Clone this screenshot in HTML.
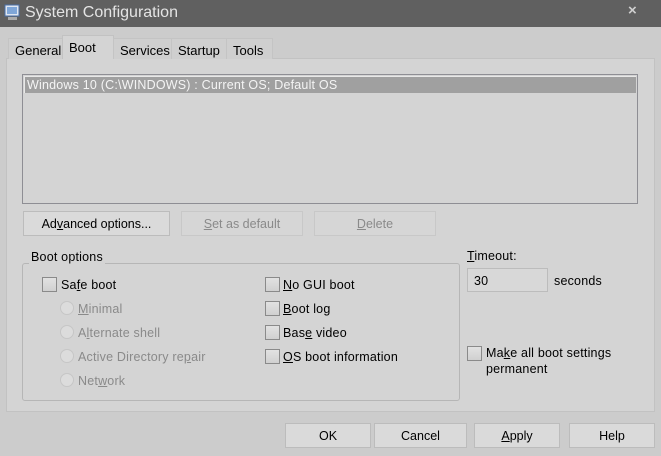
<!DOCTYPE html>
<html><head><meta charset="utf-8"><style>
*{margin:0;padding:0;box-sizing:border-box}
body{width:661px;height:456px;background:#cccccc;font:12px "Liberation Sans",sans-serif;color:#000;position:relative;overflow:hidden}
.a{position:absolute;white-space:nowrap}
.title{left:0;top:0;width:661px;height:27px;background:#606060}
.tab{position:absolute;top:38px;height:21px;border:1px solid #c4c4c4;border-bottom:none;background:#cfcfcf;padding:4px 0 0 6px;font-size:13px}
.btn{position:absolute;height:25px;border:1px solid #bcbcbc;background:#dadada;text-align:center;line-height:25px;font-size:12.5px}
.dis{color:#8a8a8a;background:#d6d6d6;border-color:#c8c8c8}
.cb{position:absolute;width:15px;height:15px;border:1px solid #8a8a8a;background:linear-gradient(#e2e2e2,#d0d0d0)}
.rd{position:absolute;width:14px;height:14px;border-radius:50%;border:1px solid #c6c6c6;background:#dcdcdc}
.g{color:#8a8a8a}
.t{font-size:12.5px;letter-spacing:0.2px}
u{text-decoration:underline}
</style></head><body>
<div class="a title"></div>
<svg class="a" style="left:4px;top:4px" width="18" height="18" viewBox="0 0 18 18"><rect x="1" y="1" width="14" height="11" fill="#dfe6f0" stroke="#4a6fa8"/><rect x="3" y="3" width="10" height="7" fill="#7fa6d8"/><rect x="4" y="13" width="9" height="3" fill="#aaa"/></svg>
<div class="a" style="left:25px;top:4px;font-size:16px;color:#e4e4e4">System Configuration</div>
<div class="a" style="left:628px;top:2px;font-size:15px;color:#cfcfcf;font-weight:bold">×</div>
<div class="a" style="left:6px;top:58px;width:649px;height:354px;background:#d4d4d4;border:1px solid #c2c2c2"></div>
<div class="tab" style="left:8px;width:55px">General</div>
<div class="tab" style="left:62px;top:35px;height:24px;width:52px;background:#d4d4d4;border-color:#c2c2c2;padding-top:4px">Boot</div>
<div class="tab" style="left:113px;width:59px">Services</div>
<div class="tab" style="left:171px;width:56px">Startup</div>
<div class="tab" style="left:226px;width:47px">Tools</div>
<div class="a" style="left:22px;top:74px;width:616px;height:130px;border:1px solid #8e8e94;background:#d4d4d4"></div>
<div class="a" style="left:24px;top:76px;width:612px;height:17px;background:#a0a0a0;border-top:1px solid #e8e8e8;border-left:1px solid #e8e8e8;color:#f4f4f4;padding-left:2px;line-height:16px;font-size:12.5px;letter-spacing:0.2px">Windows 10 (C:\WINDOWS) : Current OS; Default OS</div>
<div class="btn" style="left:23px;top:211px;width:147px">Ad<u>v</u>anced options...</div>
<div class="btn dis" style="left:181px;top:211px;width:122px"><u>S</u>et as default</div>
<div class="btn dis" style="left:314px;top:211px;width:122px"><u>D</u>elete</div>
<div class="a" style="left:22px;top:263px;width:438px;height:138px;border:1px solid #b6b6b6;border-radius:3px"></div>
<div class="a t" style="left:29px;top:250px;background:#d4d4d4;padding:0 2px">Boot options</div>
<div class="cb" style="left:42px;top:277px"></div><div class="a t" style="left:61px;top:278px">Sa<u>f</u>e boot</div>
<div class="rd" style="left:60px;top:301px"></div><div class="a g t" style="left:78px;top:302px"><u>M</u>inimal</div>
<div class="rd" style="left:60px;top:325px"></div><div class="a g t" style="left:78px;top:326px">A<u>l</u>ternate shell</div>
<div class="rd" style="left:60px;top:349px"></div><div class="a g t" style="left:78px;top:350px">Active Directory re<u>p</u>air</div>
<div class="rd" style="left:60px;top:373px"></div><div class="a g t" style="left:78px;top:374px">Net<u>w</u>ork</div>
<div class="cb" style="left:265px;top:277px"></div><div class="a t" style="left:283px;top:278px"><u>N</u>o GUI boot</div>
<div class="cb" style="left:265px;top:301px"></div><div class="a t" style="left:283px;top:302px"><u>B</u>oot log</div>
<div class="cb" style="left:265px;top:325px"></div><div class="a t" style="left:283px;top:326px">Bas<u>e</u> video</div>
<div class="cb" style="left:265px;top:349px"></div><div class="a t" style="left:283px;top:350px"><u>O</u>S boot information</div>
<div class="a t" style="left:467px;top:249px"><u>T</u>imeout:</div>
<div class="a t" style="left:467px;top:268px;width:81px;height:24px;border:1px solid #bcbcbc;background:#d8d8d8;padding:5px 0 0 6px">30</div>
<div class="a t" style="left:554px;top:274px">seconds</div>
<div class="cb" style="left:467px;top:346px"></div>
<div class="a t" style="left:486px;top:345px;line-height:16px">Ma<u>k</u>e all boot settings<br>permanent</div>
<div class="btn" style="left:285px;top:423px;width:86px">OK</div>
<div class="btn" style="left:374px;top:423px;width:93px">Cancel</div>
<div class="btn" style="left:474px;top:423px;width:86px"><u>A</u>pply</div>
<div class="btn" style="left:569px;top:423px;width:86px">Help</div>
</body></html>
